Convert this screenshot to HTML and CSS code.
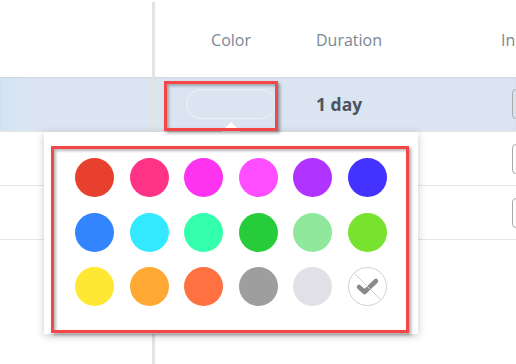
FILE: index.html
```html
<!DOCTYPE html>
<html>

<head>
    <title>Color picker</title>
    <link rel="stylesheet" href="styles.css">
</head>

<body>
    <div class="table">
        <div class="row head">
            <div class="cell name"></div>
            <div class="cell color">Color</div>
            <div class="cell dur">Duration</div>
            <div class="cell inc">In</div>
        </div>
        <div class="row sel">
            <div class="cell name"></div>
            <div class="cell color"><span class="pill"></span></div>
            <div class="cell dur"><b>1 day</b></div>
            <div class="cell inc"><span class="check"></span></div>
        </div>
        <div class="row line">
            <div class="cell name"></div>
            <div class="cell color"></div>
            <div class="cell dur"></div>
            <div class="cell inc"><span class="check"></span></div>
        </div>
        <div class="row line">
            <div class="cell name"></div>
            <div class="cell color"></div>
            <div class="cell dur"></div>
            <div class="cell inc"><span class="check"></span></div>
        </div>
        <div class="row line rest">
            <div class="cell name"></div>
        </div>
    </div>

    <!-- popup with the palette -->
    <div class="popup">
        <div class="swatches">
            <span class="dot" style="background: #e8402e;"></span>
            <span class="dot" style="background: #ff3385;"></span>
            <span class="dot" style="background: #fd33ef;"></span>
            <span class="dot" style="background: #ff4eff;"></span>
            <span class="dot" style="background: #b133ff;"></span>
            <span class="dot" style="background: #4433ff;"></span>
            <span class="dot" style="background: #3385fe;"></span>
            <span class="dot" style="background: #33e9ff;"></span>
            <span class="dot" style="background: #33ffad;"></span>
            <span class="dot" style="background: #27cc3a;"></span>
            <span class="dot" style="background: #8fe89b;"></span>
            <span class="dot" style="background: #77e32e;"></span>
            <span class="dot" style="background: #ffe833;"></span>
            <span class="dot" style="background: #ffa833;"></span>
            <span class="dot" style="background: #ff7141;"></span>
            <span class="dot" style="background: #9e9e9e;"></span>
            <span class="dot" style="background: #e0e0e6;"></span>
            <span class="dot none">
                <svg width="39" height="39" viewBox="0 0 39 39">
                    <path d="M11 20 L16.5 25 L28 14" fill="none" stroke="#8a8a8a" stroke-width="4.5"
                        stroke-linecap="round" stroke-linejoin="round" />
                    <line x1="7" y1="7" x2="32" y2="32" stroke="#cfcfcf" stroke-width="1" />
                </svg>
            </span>
        </div>
        <div class="mark mark-palette"></div>
    </div>

    <div class="mark mark-cell"></div>
</body>

</html>
```

FILE: styles.css
```css
body {
    margin: 0;
    width: 516px;
    height: 364px;
    overflow: hidden;
    position: relative;
    background-color: white;
    font-family: "Open Sans", Arial, sans-serif;
}

.table {
    display: flex;
    flex-direction: column;
    height: 364px;
}

.row {
    display: flex;
    height: 54px;
    box-sizing: border-box;
    flex-shrink: 0;
}

.row.head {
    height: 77px;
    align-items: center;
    color: #7b8794;
    font-size: 16px;
    padding-top: 2px;
}

.row.sel {
    background: linear-gradient(to right, #d4e3f4, #dae5f1 30px);
    box-shadow: inset 0 1px 2px rgba(0, 0, 0, 0.06);
}

.row.line {
    border-top: 1px solid #e6e6e6;
}

.row.rest {
    flex: 1;
}

.cell {
    display: flex;
    align-items: center;
    white-space: nowrap;
    flex-shrink: 0;
    box-sizing: border-box;
}

.cell.name {
    width: 155px;
    align-self: stretch;
    border-right: 3px solid #e4e4e4;
}

.cell.color {
    width: 152px;
    justify-content: center;
    align-self: stretch;
}

.cell.dur {
    width: 193px;
    padding-left: 9px;
    align-self: stretch;
}

.cell.dur b {
    color: #4b5461;
    font-size: 17.5px;
}

.cell.inc {
    padding-left: 1px;
    align-self: stretch;
}

.pill {
    width: 88px;
    height: 28px;
    border: 1px solid rgba(255, 255, 255, 0.45);
    border-radius: 15px;
}

.check {
    width: 28px;
    height: 28px;
    margin-left: 11px;
    border: 1px solid #a8a8a8;
    border-radius: 4px;
}

.popup {
    position: absolute;
    left: 44px;
    top: 132px;
    width: 374px;
    height: 202px;
    box-sizing: border-box;
    padding: 26px 31px;
    background-color: white;
    box-shadow: 0 2px 8px rgba(0, 0, 0, 0.22);
}

.popup::before {
    content: "";
    position: absolute;
    left: 177px;
    top: -10px;
    border-left: 10px solid transparent;
    border-right: 10px solid transparent;
    border-bottom: 10px solid white;
}

.swatches {
    display: grid;
    grid-template-columns: repeat(6, 39px);
    grid-auto-rows: 39px;
    column-gap: 15.6px;
    row-gap: 15.5px;
}

.dot {
    display: block;
    width: 39px;
    height: 39px;
    border-radius: 50%;
}

.dot.none {
    box-sizing: border-box;
    border: 1px solid #d0d0d0;
    background: white;
    overflow: hidden;
}

.dot.none svg {
    display: block;
    margin: -1px;
}

/* red annotation frames */
.mark {
    position: absolute;
    box-sizing: border-box;
    border: 3px solid #f44646;
    box-shadow: 2px 2px 3px rgba(0, 0, 0, 0.35), inset 2px 2px 3px rgba(0, 0, 0, 0.28);
}

.mark-cell {
    left: 164px;
    top: 81px;
    width: 114px;
    height: 50px;
}

.mark-palette {
    left: 7px;
    top: 14px;
    width: 358px;
    height: 187px;
}
```
